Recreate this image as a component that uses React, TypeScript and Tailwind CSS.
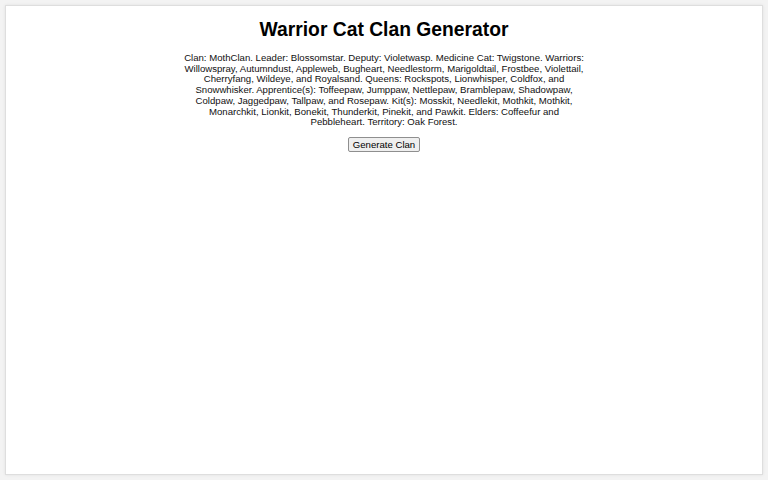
import React from "react";

const clanText =
  "Clan: MothClan. Leader: Blossomstar. Deputy: Violetwasp. Medicine Cat: Twigstone. Warriors: Willowspray, Autumndust, Appleweb, Bugheart, Needlestorm, Marigoldtail, Frostbee, Violettail, Cherryfang, Wildeye, and Royalsand. Queens: Rockspots, Lionwhisper, Coldfox, and Snowwhisker. Apprentice(s): Toffeepaw, Jumppaw, Nettlepaw, Bramblepaw, Shadowpaw, Coldpaw, Jaggedpaw, Tallpaw, and Rosepaw. Kit(s): Mosskit, Needlekit, Mothkit, Mothkit, Monarchkit, Lionkit, Bonekit, Thunderkit, Pinekit, and Pawkit. Elders: Coffeefur and Pebbleheart. Territory: Oak Forest.";

export default function App() {
  return (
    <div
      className="h-[480px] w-[768px] bg-[#f3f3f3] p-[5px]"
      style={{ fontFamily: '"Liberation Sans", Arial, sans-serif' }}
    >
      <div className="flex h-[470px] flex-col items-center border border-[#dedede] bg-white text-black shadow-[0_0_3px_rgba(0,0,0,0.08)]">
        <h1 className="mt-[13px] text-[19.3px] font-bold leading-[22px]">
          Warrior Cat Clan Generator
        </h1>
        <p className="mt-[12px] w-[404px] text-center text-[9.6px] leading-[10.7px] text-[#111]">
          {clanText}
        </p>
        <button
          type="button"
          className="mt-[9px] h-[15px] rounded-[2px] border border-[#8f8f8f] bg-[#efefef] px-[4px] text-[9.6px] leading-[13px] text-black"
        >
          Generate Clan
        </button>
      </div>
    </div>
  );
}
